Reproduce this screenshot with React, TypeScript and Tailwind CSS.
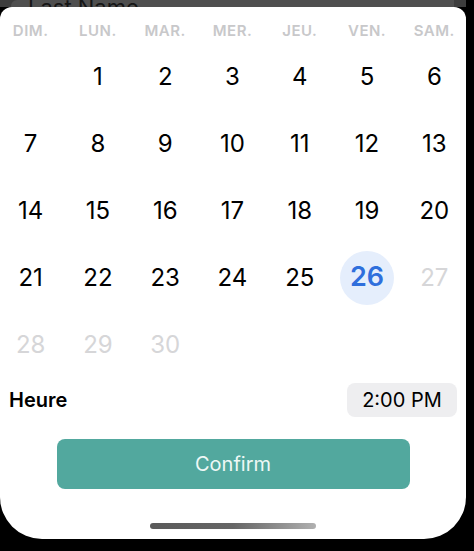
const headers = ["DIM.", "LUN.", "MAR.", "MER.", "JEU.", "VEN.", "SAM."];

type Cell = { day: number | null; muted?: boolean; selected?: boolean };

// blank first slot (month starts on Monday), then 1..30
const cells: Cell[] = [
  { day: null },
  ...Array.from({ length: 30 }, (_, i) => ({
    day: i + 1,
    muted: i + 1 > 26,
    selected: i + 1 === 26,
  })),
];

export default function App() {
  return (
    <div
      className="w-[474px] h-[551px] bg-black flex overflow-hidden"
      style={{ fontFamily: "Inter, 'Noto Sans', sans-serif" }}
    >
      <div className="w-[466px] flex flex-col">
        {/* Form field peeking above the sheet */}
        <div className="h-[7px] bg-[#3d3d3d] overflow-hidden flex">
          <div className="ml-[11px] w-[443px] bg-[#4f4f4f] rounded-tl-[6px] overflow-hidden">
            <div className="ml-[17px] -mt-[4px] text-[22px] leading-none text-[#161616]">
              Last Name
            </div>
          </div>
        </div>

        {/* Sheet */}
        <div className="h-[532px] bg-white rounded-t-[12px] rounded-b-[42px] flex flex-col pt-[12px]">
          <div className="-ml-[3px] w-[471px] grid grid-cols-7">
            {headers.map((h) => (
              <div
                key={h}
                className="h-[24px] flex items-center justify-center text-[15px] font-semibold tracking-[0.5px] text-[#c8c8ca]"
              >
                {h}
              </div>
            ))}
            {cells.map((c, i) => (
              <div key={i} className="h-[67px] flex items-center justify-center">
                {c.day === null ? null : c.selected ? (
                  <div className="w-[54px] h-[54px] rounded-full bg-[#e5eefc] flex items-center justify-center text-[27px] font-semibold text-[#2f6fdc]">
                    {c.day}
                  </div>
                ) : (
                  <span
                    className={
                      c.muted
                        ? "text-[24px] text-[#d6d6d8]"
                        : "text-[24px] text-black"
                    }
                  >
                    {c.day}
                  </span>
                )}
              </div>
            ))}
          </div>

          <div className="mt-[5px] px-[9px] flex items-center justify-between">
            <span className="text-[20px] font-semibold text-black">Heure</span>
            <div className="w-[110px] h-[34px] rounded-[8px] bg-[#eeeef0] flex items-center justify-center text-[20px] text-black">
              2:00 PM
            </div>
          </div>

          <button className="mt-[22px] mx-auto w-[353px] h-[50px] rounded-[8px] bg-[#52a89e] text-[20px] text-[#eef8f6]">
            Confirm
          </button>

          <div className="mt-[34px] mx-auto w-[166px] h-[6px] rounded-full bg-gradient-to-r from-[#5a5a5a] via-[#666666] to-[#b0b0b0]" />
        </div>
      </div>
      <div className="flex-1 bg-black" />
    </div>
  );
}
